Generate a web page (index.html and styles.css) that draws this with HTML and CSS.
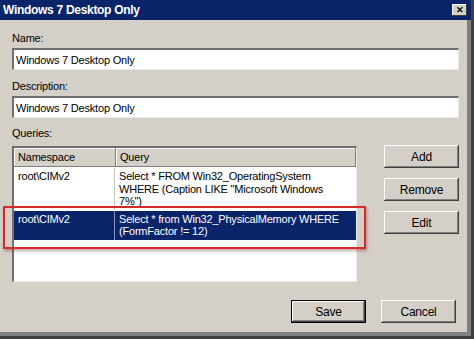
FILE: index.html
```html
<!DOCTYPE html>
<html lang="en">
<head>
    <meta charset="UTF-8">
    <title>Windows 7 Desktop Only</title>
    <link rel="stylesheet" href="styles.css">
</head>
<body>
    <div class="window">
        <div class="titlebar">
            <span class="title">Windows 7 Desktop Only</span>
            <button class="close-button">&#x2715;</button>
        </div>
        <div class="form">
            <label class="field-label">Name:</label>
            <input class="text-input" type="text" value="Windows 7 Desktop Only">
            <label class="field-label description-label">Description:</label>
            <input class="text-input" type="text" value="Windows 7 Desktop Only">
            <label class="field-label queries-label">Queries:</label>
            <div class="queries">
                <div class="list">
                    <div class="list-row list-header">
                        <div class="cell col-ns">Namespace</div>
                        <div class="cell col-query">Query</div>
                    </div>
                    <div class="list-row">
                        <div class="cell col-ns">root\CIMv2</div>
                        <div class="cell col-query">Select * FROM Win32_OperatingSystem WHERE (Caption LIKE "Microsoft Windows 7%")</div>
                    </div>
                    <div class="list-row selected">
                        <div class="cell col-ns">root\CIMv2</div>
                        <div class="cell col-query">Select * from Win32_PhysicalMemory WHERE (FormFactor != 12)</div>
                    </div>
                    <!-- рамка-выделение поверх выбранной строки -->
                    <div class="highlight"></div>
                </div>
                <div class="side-buttons">
                    <button class="button">Add</button>
                    <button class="button">Remove</button>
                    <button class="button">Edit</button>
                </div>
            </div>
            <div class="footer">
                <button class="button default">Save</button>
                <button class="button">Cancel</button>
            </div>
        </div>
    </div>
</body>
</html>
```

FILE: styles.css
```css
body {
    margin: 0;
    padding: 0;
    font-family: "Liberation Sans", Arial, sans-serif;
    font-size: 11px;
    letter-spacing: -0.2px;
    background-color: #d4d0c8;
}
.window {
    width: 474px;
    height: 339px;
    box-sizing: border-box;
    background-color: #d4d0c8;
    border-right: 3px solid #404040;
    border-bottom: 3px solid #404040;
    box-shadow: inset -4px -4px 0 #808080;
    display: flex;
    flex-direction: column;
}
.titlebar {
    height: 20px;
    background-color: #0a246a;
    color: #fff;
    display: flex;
    justify-content: space-between;
    align-items: center;
    padding: 0 4px 0 3px;
}
.title {
    font-weight: bold;
    font-size: 12px;
    letter-spacing: -0.3px;
}
.close-button {
    width: 15px;
    height: 12px;
    padding: 0;
    background-color: #d4d0c8;
    border: none;
    box-shadow: inset -1px -1px 0 #404040, inset 1px 1px 0 #fff;
    font-size: 9px;
    font-weight: bold;
    line-height: 12px;
    color: #000;
}
.form {
    padding: 11px 12px 0 12px;
    display: flex;
    flex-direction: column;
}
.field-label {
    line-height: 14px;
    color: #000;
}
.description-label {
    margin-top: 9px;
}
.queries-label {
    margin-top: 8px;
}
.text-input {
    margin-top: 3px;
    width: 447px;
    height: 22px;
    box-sizing: border-box;
    border: none;
    border-top: 2px solid #6f6f6f;
    border-left: 2px solid #6f6f6f;
    border-right: 1px solid #e8e8e8;
    border-bottom: 1px solid #e8e8e8;
    padding: 0 2px;
    font-family: inherit;
    font-size: 11px;
    letter-spacing: -0.2px;
    color: #000;
    background-color: #fff;
}
.queries {
    margin-top: 6px;
    display: flex;
    align-items: flex-start;
}
.list {
    position: relative;
    width: 345px;
    height: 136px;
    box-sizing: border-box;
    background-color: #fff;
    border-top: 2px solid #6f6f6f;
    border-left: 2px solid #6f6f6f;
    border-right: 1px solid #e8e8e8;
    border-bottom: 1px solid #e8e8e8;
}
.list-row {
    display: flex;
    line-height: 12.5px;
}
.list-row + .list-row {
    margin-top: 1px;
}
.cell {
    box-sizing: border-box;
    padding: 2px 4px 2px 4px;
}
.col-ns {
    width: 101px;
    border-right: 1px solid #c8c8c8;
}
.col-query {
    width: 240px;
    padding-right: 12px;
}
.list-header {
    height: 19px;
    background-color: #d4d0c8;
}
.list-header .cell {
    line-height: 15px;
    box-shadow: inset -1px -1px 0 #808080, inset 1px 1px 0 #fff;
    border-right: none;
}
.list-header .col-ns {
    width: 102px;
}
.list-header .col-query {
    width: 240px;
}
.list-row.selected {
    background-color: #0a246a;
    color: #fff;
}
.list-row.selected .col-ns {
    border-right-color: #8a94c0;
}
.highlight {
    position: absolute;
    left: -11px;
    top: 58px;
    width: 359px;
    height: 39px;
    border: 2px solid #d42a2a;
    box-shadow: 1px 2px 3px rgba(120, 0, 0, 0.35);
}
.side-buttons {
    margin-left: 27px;
    display: flex;
    flex-direction: column;
    gap: 10px;
    margin-top: -1px;
}
.button {
    width: 75px;
    height: 23px;
    padding: 0;
    background-color: #d4d0c8;
    border: none;
    box-shadow: inset -1px -1px 0 #404040, inset 1px 1px 0 #fff, inset -2px -2px 0 #808080;
    font-family: inherit;
    font-size: 12px;
    letter-spacing: -0.2px;
    color: #000;
}
.button.default {
    box-shadow: inset 0 0 0 1px #000, inset -2px -2px 0 #404040, inset 2px 2px 0 #fff, inset -3px -3px 0 #808080;
}
.footer {
    margin-top: 18px;
    display: flex;
    justify-content: flex-end;
    gap: 15px;
    padding-right: 3px;
}
```
